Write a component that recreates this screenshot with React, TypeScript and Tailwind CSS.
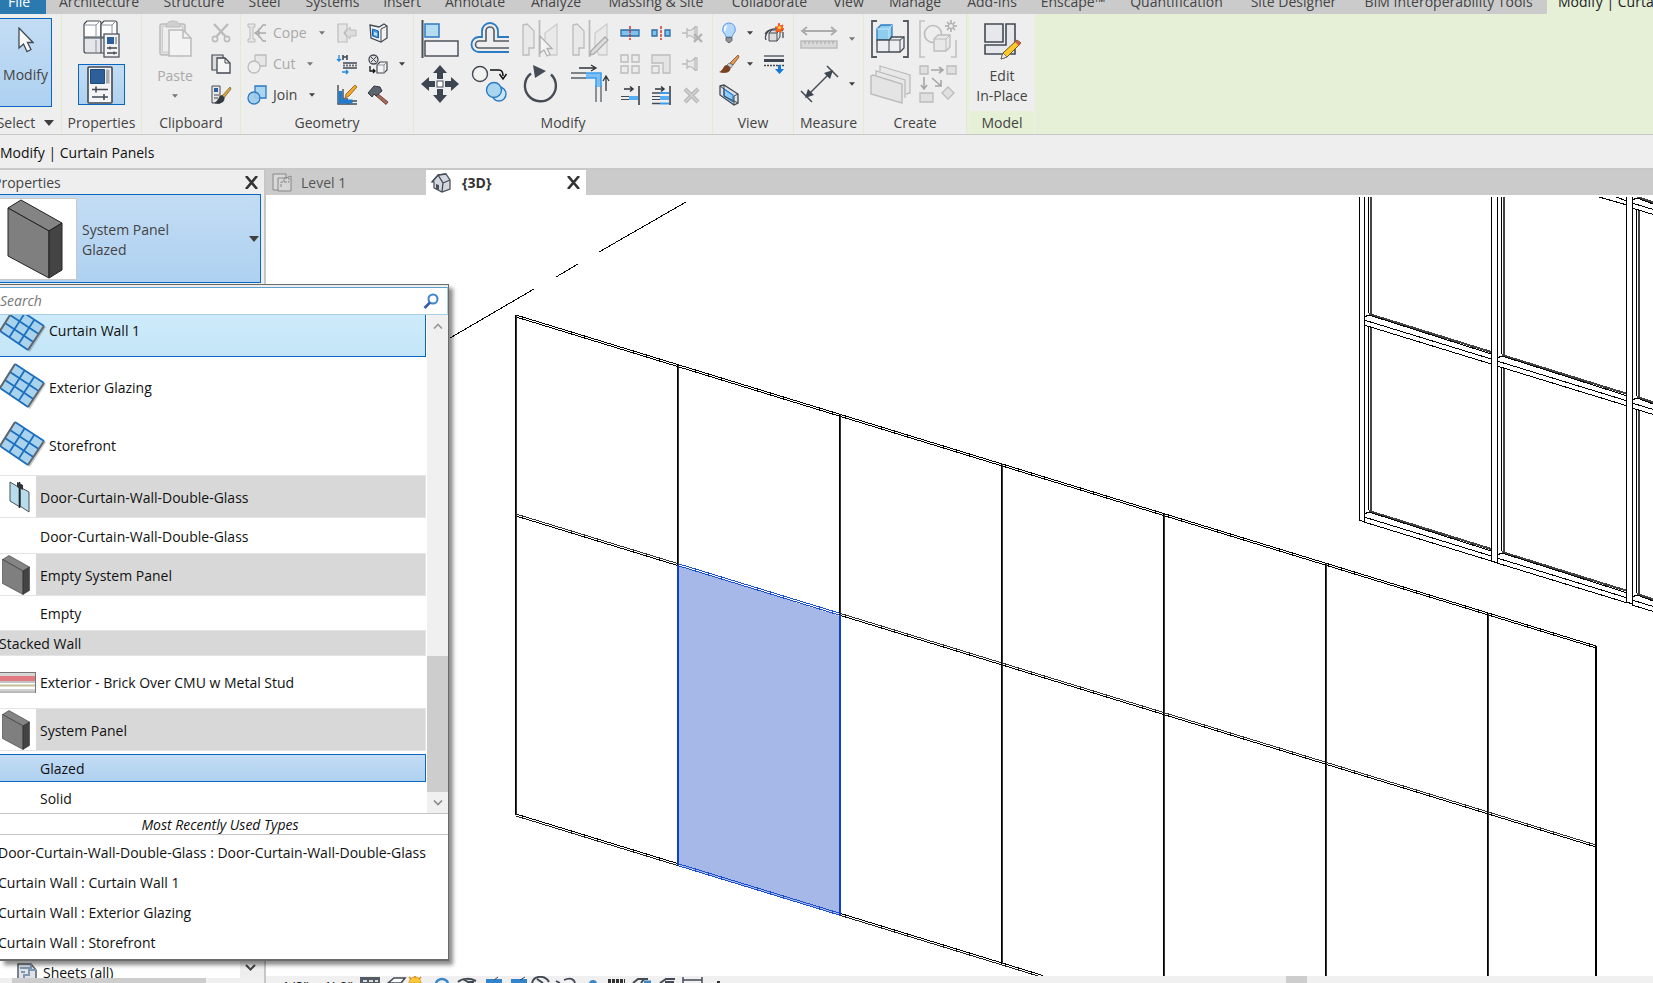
import type { ReactNode } from 'react';
import clsx from 'clsx';

const DARK = '#434a54';
const GREY = '#bcbcbc';
const PALE = '#e6e6e6';
const BLUE = '#2a7bc3';
const SKY = '#a9d5ef';

function Svg({ size = 20, children }: { size?: number; children: ReactNode }) {
  return (
    <svg width={size} height={size} viewBox={`0 0 ${size} ${size}`} fill="none" className="shrink-0 overflow-visible" aria-hidden="true">
      {children}
    </svg>
  );
}

function Caret({ dim = false, large = false }: { dim?: boolean; large?: boolean }) {
  return (
    <svg width={large ? 10 : 6} height={large ? 6 : 4} viewBox="0 0 10 6" className="shrink-0" aria-hidden="true">
      <path d="M0 0h10L5 6z" fill={dim ? '#777' : '#3f3f3f'} />
    </svg>
  );
}

function CloseIcon() {
  return (
    <svg width="13" height="13" viewBox="0 0 13 13" aria-hidden="true">
      <path d="M1 0L12 13M12 0L1 13" stroke="#333" strokeWidth="2.6" />
    </svg>
  );
}

/* ---------- ribbon icons ---------- */

const CursorIcon = () => (
  <svg width="16" height="26" viewBox="0 0 16 26" aria-hidden="true">
    <path d="M1 1v20l4.5-4 3.5 7.5 4-2-3.5-7H15z" fill="#f8f8f8" stroke={DARK} strokeWidth="1.3" />
  </svg>
);

const TypePropertiesIcon = () => (
  <Svg size={38}>
    <g stroke={DARK} strokeWidth="1.2" fill="#fdfdfd">
      <path d="M1 5q0-1 1-2l2-2h12q2 0 2 2v14H1z" />
      <path d="M18 5q0-1 1-2l2-2h11q2 0 2 2v14H18z" />
      <path d="M1 18h17v14q0 1-1 1H3q-2 0-2-2zM18 18h5v15h-5z" fill="#e4e6ea" />
      <rect x="21" y="14" width="15" height="23" fill="#f3f3f3" />
    </g>
    <path d="M2 5h11v11M13 5l4-4M19 5h10v8M29 5l4-4M13 20v12" stroke="#8d939b" />
    <path d="M24 17h7v7h-7z" fill="#2d5f9a" />
    <path d="M32 17h2v7h-2z" fill="#aaa" />
    <path d="M24 28h10M24 33h10M27 26.5v3M31 31.5v3" stroke={DARK} strokeWidth="1.3" />
  </Svg>
);

const PropertiesIcon = () => (
  <svg width="26" height="38" viewBox="0 0 26 38" aria-hidden="true">
    <rect x="1" y="1" width="24" height="36" rx="1" fill="#f4f4f4" stroke={DARK} strokeWidth="1.6" />
    <path d="M3.5 3.5h14v14h-14z" fill="#2d5f9a" stroke="#1f4a7c" />
    <path d="M19 3.5h3.5v14H19z" fill="#a9abb0" />
    <path d="M5 23.5h16M5 31h16M9 20.5v6M17 28v6" stroke={DARK} strokeWidth="1.6" />
  </svg>
);

const PasteIcon = () => (
  <Svg size={38}>
    <rect x="4" y="4" width="25" height="31" rx="2" fill="#dedede" stroke={GREY} strokeWidth="1.5" />
    <path d="M6.5 6.500h20V32h-20z" fill="#eee" stroke="#ccc" />
    <path d="M10 7c0-4 3-6 7-6s7 2 7 6z" fill="#d0d0d0" stroke={GREY} />
    <path d="M13 10h14l8 8v18H13z" fill="#f3f3f3" stroke={GREY} strokeWidth="1.5" />
    <path d="M27 10v8h8" stroke={GREY} strokeWidth="1.5" />
  </Svg>
);

const CutIcon = () => (
  <Svg>
    <path d="M3 1l12 13M17 1L5 14" stroke={GREY} strokeWidth="2.4" />
    <circle cx="4" cy="16" r="2.6" stroke={GREY} strokeWidth="1.6" />
    <circle cx="16" cy="16" r="2.6" stroke={GREY} strokeWidth="1.6" />
  </Svg>
);

const CopyIcon = () => (
  <Svg>
    <path d="M1 1h11v15H1z" fill="#ddd" stroke={DARK} strokeWidth="1.2" />
    <path d="M6 4h8l5 5v10H6z" fill="#f6f6f6" stroke={DARK} strokeWidth="1.3" />
    <path d="M14 4v5h5" stroke={DARK} />
  </Svg>
);

const MatchIcon = () => (
  <Svg>
    <path d="M1 1h8v17H1z" fill="#e8e8e8" stroke={DARK} />
    <path d="M3 3h4v4H3z" fill="#2d5f9a" />
    <path d="M3 10h5M3 13h4" stroke={DARK} />
    <path d="M19 2l-8 9 2 2 7-9z" fill="#d9a441" stroke="#775a20" strokeWidth=".7" />
    <path d="M11 10c-4 1-3 6-8 8 5 2 11 0 10.5-5.5z" fill="#333a42" />
  </Svg>
);

const CopeIcon = () => (
  <Svg>
    <path d="M1 1h7v3H6v12h2v3H1v-3h2V4H1z" fill={PALE} stroke={GREY} />
    <path d="M19 2h-3l-3 4h-1v8h1l3 4h3M8 10h11M12 7l-4 3 4 3" stroke="#aaa" strokeWidth="1.3" />
  </Svg>
);

const CutGeometryIcon = () => (
  <Svg>
    <path d="M8 1h11v11h-7" fill={PALE} stroke={GREY} strokeWidth="1.3" />
    <path d="M8 1v6" stroke={GREY} strokeWidth="1.3" />
    <circle cx="7" cy="13" r="6" fill="#efefef" stroke={GREY} strokeWidth="1.3" />
  </Svg>
);

const JoinIcon = () => (
  <Svg>
    <path d="M8 1h11v12H8z" fill={SKY} stroke={BLUE} strokeWidth="1.3" />
    <circle cx="7" cy="13" r="6" fill="#9fcbea" fillOpacity=".9" stroke={BLUE} strokeWidth="1.3" />
  </Svg>
);

const WallOpenIcon = () => (
  <Svg>
    <path d="M1 1h9v5l-3 4 3 4v5H1z" fill={PALE} stroke={GREY} strokeWidth="1.2" />
    <path d="M19 7h-6V4l-5 6 5 6v-3h6z" fill="#ddd" stroke={GREY} />
  </Svg>
);

const PaintFaceIcon = () => (
  <Svg>
    <path d="M2 2l9 2 5-3 3 2v12l-6 4L3 15z" fill="#f2f2f2" stroke={DARK} strokeWidth="1.3" />
    <path d="M13 6v13M13 6l6-3" stroke={DARK} />
    <path d="M4.5 6l6 2v7l-6-2z" fill="#3c94da" stroke="#1d62a5" />
    <path d="M6 9l3 1v3l-3-1z" fill="#bfe2fa" />
  </Svg>
);

const BeamIcon = () => (
  <Svg>
    <path d="M6 1v5M10 1v5M6 3h4" stroke={DARK} strokeWidth="1.6" />
    <path d="M2 1v6M0 5l2 2 2-2M5 18h6M9 16l2 2-2 2" stroke="#1e88e5" strokeWidth="1.3" />
    <path d="M6 9h14M6 14h14" stroke={DARK} strokeWidth="1.6" />
    <path d="M6 11.5h14" stroke="#6b7179" strokeWidth="2" strokeDasharray="2 1" />
  </Svg>
);

const SplitFaceIcon = () => (
  <Svg>
    <circle cx="5.5" cy="5.5" r="4.5" fill="#ddd" stroke={DARK} strokeWidth="1.3" />
    <path d="M3 3l5 5M8 3L3 8" stroke={DARK} />
    <path d="M2 12v5h5M5 15l2 2-2 2" stroke="#111" strokeWidth="1.3" />
    <path d="M9 11l3-3h7v8l-3 3H9z" fill="#f4f4f4" stroke={DARK} strokeWidth="1.2" />
    <path d="M9 11h7v8M16 11l3-3" stroke="#8d939b" />
  </Svg>
);

const WallJoinIcon = () => (
  <Svg>
    <path d="M1 0v19h19M6 4v10h5M11 19v-3h9" stroke={DARK} strokeWidth="1.4" />
    <path d="M3.5 6v10.500h12" stroke="#1e7bd0" strokeWidth="4" />
    <path d="M18 0l2 2L12 11l-4 2 1-4z" fill="#f4a52b" stroke="#8a5a14" strokeWidth=".8" />
  </Svg>
);

const HammerIcon = () => (
  <Svg>
    <path d="M9 8l11 9-2 2.5L7 10z" fill="#a86a58" stroke="#553229" strokeWidth=".8" />
    <path d="M0 8l6-7 6 1 2 4-6 5-2-2-2 3z" fill="#5c646e" stroke="#30363e" />
  </Svg>
);

const AlignIcon = () => (
  <Svg size={38}>
    <path d="M1.5 0v38" stroke="#4a4f57" strokeWidth="2" />
    <rect x="4" y="4" width="14" height="13" fill="#b5dcf0" stroke={BLUE} strokeWidth="1.5" />
    <rect x="4" y="21" width="33" height="15" fill="#f2f2f5" stroke={DARK} strokeWidth="1.4" />
  </Svg>
);

const OffsetIcon = () => (
  <Svg size={38}>
    <path d="M38 17H27V11a8 8 0 0 0-16 0v6H8a7.5 7.5 0 0 0 0 15h30" stroke={BLUE} strokeWidth="1.8" />
    <path d="M38 21H23V11a4 4 0 0 0-8 0v10H8a3.5 3.5 0 0 0 0 7h30" stroke="#555b64" strokeWidth="1.6" />
  </Svg>
);

function MirrorIcon({ draw = false }: { draw?: boolean }) {
  return (
    <Svg size={38}>
      <path d="M2 5l4-1 7 7v17H8v7H2z" fill="#e9e9e9" stroke={GREY} strokeWidth="1.3" />
      <path d="M36 4l-12 9v14l4 8h8z" fill="#e9e9e9" stroke="#ccc" strokeWidth="1.3" />
      <path d="M18.5 0v37" stroke={GREY} strokeWidth="1.8" />
      {draw ? (
        <path d="M20 31L34 17l3 3-14 14-4 1z" fill="#ddd" stroke="#aaa" strokeWidth="1.3" />
      ) : (
        <path d="M19 16v17l4-3 3 6 3-1.5-3-6h5z" fill="#f4f4f4" stroke="#b0b0b0" strokeWidth="1.3" />
      )}
    </Svg>
  );
}

const MoveIcon = () => (
  <Svg size={38}>
    <path
      d="M19 0l7 8h-4v6h-6V8h-4zM19 38l7-8h-4v-6h-6v6h-4zM0 19l8-7v4h6v6H8v4zM38 19l-8-7v4h-6v6h6v4z"
      fill="#3d4650"
    />
    <rect x="16" y="16" width="6" height="6" fill="#fff" stroke={DARK} />
  </Svg>
);

const CopyObjectIcon = () => (
  <Svg size={38}>
    <circle cx="9" cy="9" r="7.5" fill="#f2f2f2" stroke={DARK} strokeWidth="1.4" />
    <path d="M19 5h9c3 0 4 2 4 6M28.5 9l3.5 5 3.5-5" stroke="#111" strokeWidth="1.5" />
    <circle cx="28" cy="29" r="7" fill="#c9e6f7" stroke={BLUE} strokeWidth="1.4" />
    <circle cx="23" cy="25" r="7.500" fill="#a9d5ef" stroke={BLUE} strokeWidth="1.4" />
  </Svg>
);

const RotateIcon = () => (
  <Svg size={38}>
    <path d="M10 8.500a15.500 15.500 0 1 0 20 1" stroke="#454c55" strokeWidth="2.4" />
    <path d="M12 0l13 6-11 7z" fill="#454c55" />
  </Svg>
);

const TrimIcon = () => (
  <Svg size={38}>
    <path d="M8 3h16M20 0l5 3-5 3M35 26V12M32 16l3-5 3 5" stroke="#30363e" strokeWidth="1.3" />
    <path d="M0 8h15M0 13h15M25 20v17M30 20v17" stroke="#5a6068" strokeWidth="1.3" />
    <path d="M15 10.5h12.500V22" stroke="#7dbff5" strokeWidth="5" />
    <path d="M15 8h15v14M15 13h10v9" stroke="#3a9cf0" strokeWidth="1.5" />
  </Svg>
);

const SplitIcon = ({ gap = false }: { gap?: boolean }) => (
  <Svg>
    <path d={gap ? 'M1 7h5v6H1zM14 7h5v6h-5z' : 'M1 7h18v6H1z'} fill="#7fc0ec" stroke="#2b6ea8" strokeWidth="1.3" />
    <path d="M10 3v14" stroke="#d8261c" strokeWidth="1.4" strokeDasharray="3 1" />
  </Svg>
);

const ArrayIcon = () => (
  <Svg>
    <path d="M1 1h7v7H1zM12 1h7v7h-7zM1 12h7v7H1zM12 12h7v7h-7z" fill="#ececec" stroke={GREY} strokeWidth="1.4" />
  </Svg>
);

const ScaleIcon = () => (
  <Svg>
    <path d="M1 1h18v18h-7V9H1z" fill="#e4e4e4" stroke={GREY} strokeWidth="1.3" />
    <path d="M1 12h7v7H1z" fill="#ececec" stroke={GREY} strokeWidth="1.3" />
  </Svg>
);

const PinIcon = ({ off = false }: { off?: boolean }) => (
  <Svg>
    <path d="M0 10h5M5 5v10M5 7c4 1 5 0 8-3v12c-3-3-4-4-8-3M13 4v12h2V4z" stroke={GREY} strokeWidth="1.3" fill="#e8e8e8" />
    {off && <path d="M12 11l8 8M20 11l-8 8" stroke="#b3b3b3" strokeWidth="2.4" />}
  </Svg>
);

const ExtendIcon = ({ many = false }: { many?: boolean }) => (
  <Svg>
    <path d="M4 4h8M10 1.5l3 2.5-3 2.500M19 1v19" stroke="#30363e" strokeWidth="1.5" />
    <path d="M1 11.5h8M1 14.5h8" stroke={DARK} strokeWidth="1.2" />
    <path d="M9 13h9" stroke="#55aef5" strokeWidth="4" />
    {many && (
      <>
        <path d="M1 8h8M1 18.5h8" stroke={DARK} strokeWidth="1.5" />
        <path d="M9 8h9M9 18.5h9" stroke="#3a9cf0" strokeWidth="2" />
      </>
    )}
  </Svg>
);

const DeleteIcon = () => (
  <Svg>
    <path d="M3 4l13 13M16 4L3 17" stroke="#b5b5b5" strokeWidth="4" />
    <path d="M3.5 4.5l12 12M15.5 4.5l-12 12" stroke="#cecece" strokeWidth="2" />
  </Svg>
);

const BulbIcon = () => (
  <Svg>
    <path d="M10 0a6.5 6.5 0 0 0-4 11.5L7 14h6l1-2.5A6.5 6.5 0 0 0 10 0z" fill="#b4d8fb" stroke="#5b9be0" />
    <path d="M8 3c-2 1-2.5 3-2 5" stroke="#fff" strokeWidth="1.6" />
    <path d="M7 14.5h6v3l-2 2H9l-2-2z" fill="#8d939b" stroke="#555" strokeWidth=".8" />
  </Svg>
);

const HideIcon = () => (
  <Svg>
    <path d="M1 11c3-5 12-7 18-3M2 17c-2-5 2-9 5-10M19 15V9" stroke={DARK} strokeWidth="1.3" />
    <path d="M5 10h8v8H5zM5 10l3-3h8l-3 3M16 7v7l-3 4" fill="#dcdcdc" stroke={DARK} />
    <path d="M15 0l1 3 3-1-1 3 2 1-3 1 0 3-2-2-3 1 1-3-2-2h3z" fill="#ff6a1a" stroke="#f0561a" />
    <circle cx="15.5" cy="4.5" r="1.6" fill="#ffd24a" />
  </Svg>
);

const BrushIcon = () => (
  <Svg>
    <path d="M19 1l-8 8 3 2 6-8z" fill="#e59a55" stroke="#7a4a20" strokeWidth=".8" />
    <path d="M10 9l-2 2 4 3 2-3z" fill="#c9ced6" stroke="#555" strokeWidth=".6" />
    <path d="M8 11c-4 0-3 5-8 7 5 2 12 1 11.5-4.5z" fill="#7b4220" />
  </Svg>
);

const LineworkIcon = () => (
  <Svg>
    <path d="M0 2h20" stroke={DARK} strokeWidth="1.3" />
    <path d="M0 6.5h20" stroke="#3d4650" strokeWidth="3" />
    <path d="M0 11.5h20" stroke={DARK} strokeWidth="1.3" strokeDasharray="2 1" />
    <path d="M14 11h3v4h3l-4.5 5-4.5-5h3z" fill="#1478d4" />
  </Svg>
);

const SectionBoxIcon = () => (
  <Svg>
    <path d="M1 1l4-1 14 9v9l-4 2L1 10z" fill="#dfe3e8" stroke={DARK} strokeWidth="1.3" />
    <path d="M5 4l9 6v7l-9-6z" fill="#8ecbf7" stroke="#1e7bd0" strokeWidth="1.2" />
    <path d="M15 11v9M15 11l4-2M1 1l4 3M5 0v11l14 7" stroke={DARK} />
  </Svg>
);

const RulerIcon = () => (
  <Svg size={38}>
    <path d="M3 11h31M7 7l-5 4 5 4M31 7l5 4-5 4" stroke="#ababab" strokeWidth="1.8" />
    <rect x="1" y="21" width="36" height="7" fill="#d9d9d9" stroke={GREY} strokeWidth="1.5" />
    <path d="M5 21v3M9 21v3M13 21v3M17 21v3M21 21v3M25 21v3M29 21v3M33 21v3" stroke="#a5a5a5" />
  </Svg>
);

const DimensionIcon = () => (
  <Svg size={38}>
    <path d="M8 30L30 8" stroke="#454c55" strokeWidth="1.5" />
    <path d="M5 33l3-9 6 6zM33 5l-3 9-6-6z" fill="#3d4650" />
    <path d="M1 26l11 11M27 1l11 11" stroke="#454c55" strokeWidth="1.5" />
  </Svg>
);

const AssemblyIcon = () => (
  <Svg size={38}>
    <path d="M6 1H1v36h5M32 1h5v36h-5" stroke="#555b64" strokeWidth="1.8" />
    <path d="M6 9l4-4h11v11l-3 4H6z" fill="#8fcdee" stroke={BLUE} strokeWidth="1.3" />
    <path d="M6 9h12v11M18 9l3-4" stroke="#c9e8f8" />
    <path d="M6 20h12l3-3h12v11l-4 4H6z" fill="#eceef1" stroke={DARK} strokeWidth="1.3" />
    <path d="M18 20v12M18 20h11v12M29 20l4-3" stroke={DARK} />
  </Svg>
);

const PartsIcon = () => (
  <Svg size={38}>
    <path d="M6 1H1v36h5M32 37h5V20" stroke="#c2c2c2" strokeWidth="1.6" />
    <circle cx="14" cy="14" r="8.5" stroke={GREY} strokeWidth="1.6" />
    <path d="M15 19l4-4h12v12l-4 4H15z" fill="#e8e8e8" stroke={GREY} strokeWidth="1.3" />
    <path d="M15 19h12v12M27 19l4-4" stroke={GREY} />
    <path d="M32 0v12M26 6h12M28 2l8 8M36 2l-8 8" stroke="#aaa" strokeWidth="1.5" />
    <circle cx="32" cy="6" r="2.5" fill="#eee" stroke="#aaa" />
  </Svg>
);

const GroupIcon = () => (
  <Svg size={38}>
    <path d="M9 6V1l30 9v18l-4 1" fill="#e8e8e8" stroke={GREY} strokeWidth="1.3" />
    <path d="M5 10V6l29 9v18" fill="#e8e8e8" stroke={GREY} strokeWidth="1.3" />
    <path d="M0 11l2-1 29 9v19L0 29z" fill="#e4e4e4" stroke={GREY} strokeWidth="1.4" />
  </Svg>
);

const SimilarIcon = () => (
  <Svg size={38}>
    <path d="M1 1h8v8H1zM28 1h9v8h-9zM1 28h13v9H1zM29 22l6 6-6 6-6-6z" fill="#e0e0e0" stroke={GREY} strokeWidth="1.3" />
    <path d="M12 5h11M20 2l4 3-4 3M5 12v11M2 20l3 4 3-4M13 13l9 8M22 15v6h-6" stroke="#a6a6a6" strokeWidth="1.6" />
  </Svg>
);

const EditInPlaceIcon = () => (
  <Svg size={38}>
    <path d="M2 2h18v18H2zM23 2h9v30H2v-9h21z" fill="#e6e8ec" stroke={DARK} strokeWidth="1.6" />
    <path d="M34 18l4 3-14 14-6 2 2-6z" fill="#ffc928" stroke="#6b5420" />
    <path d="M34 18l4 3-2 3-4-4z" fill="#c9604a" />
    <path d="M20 31l4 4-6 2z" fill="#eee" stroke="#555" strokeWidth=".7" />
  </Svg>
);

/* ---------- ribbon ---------- */

const TABS = [
  { label: 'Architecture', width: 'w-[106px]' },
  { label: 'Structure', width: 'w-[84px]' },
  { label: 'Steel', width: 'w-[57px]' },
  { label: 'Systems', width: 'w-[79px]' },
  { label: 'Insert', width: 'w-[60px]' },
  { label: 'Annotate', width: 'w-[86px]' },
  { label: 'Analyze', width: 'w-[76px]' },
  { label: 'Massing & Site', width: 'w-[124px]' },
  { label: 'Collaborate', width: 'w-[103px]' },
  { label: 'View', width: 'w-[55px]' },
  { label: 'Manage', width: 'w-[78px]' },
  { label: 'Add-Ins', width: 'w-[76px]' },
  { label: 'Enscape™', width: 'w-[86px]' },
  { label: 'Quantification', width: 'w-[121px]' },
  { label: 'Site Designer', width: 'w-[113px]' },
  { label: 'BIM Interoperability Tools', width: 'w-[197px]' },
];

function TabStrip() {
  return (
    <nav className="flex h-[14px] items-end overflow-hidden whitespace-nowrap bg-[#cbcbcb] text-[#444]">
      <button className="h-6 w-[46px] shrink-0 bg-[#2a7ab0] pr-2 text-center leading-6 text-white">File</button>
      {TABS.map((tab) => (
        <button key={tab.label} className={clsx('flex h-6 shrink-0 justify-center leading-6', tab.width)}>
          {tab.label}
        </button>
      ))}
      <button className="h-6 flex-1 overflow-hidden bg-[#e5f0d7] pl-[11px] text-left leading-6 text-[#222]">Modify | Curtain Panels</button>
    </nav>
  );
}

function Panel({ title, className, children }: { title: ReactNode; className: string; children: ReactNode }) {
  return (
    <section className={clsx('flex shrink-0 flex-col border-r border-[#dfecce] bg-[#eee]', className)}>
      <div className="flex h-[97px] pt-[3px]">{children}</div>
      <div className="flex h-[23px] items-center justify-center whitespace-nowrap pt-px leading-5">{title}</div>
    </section>
  );
}

function Tool({ label, children }: { label: string; children: ReactNode }) {
  return (
    <button aria-label={label} className="flex items-center justify-center">
      {children}
    </button>
  );
}

function GeometryRow({ label, icon, dim = false }: { label: string; icon: ReactNode; dim?: boolean }) {
  return (
    <button className={clsx('flex items-center gap-[6px] whitespace-nowrap', dim && 'text-[#a9a9a9]')}>
      {icon}
      <span>{label}</span>
      <span className="pl-[6px]">
        <Caret dim={dim} />
      </span>
    </button>
  );
}

function Ribbon() {
  return (
    <div className="flex h-[121px] shrink-0 overflow-hidden border-b border-[#c8c8c8] bg-[#e5f0d7] text-[#444]">
      <Panel
        className="w-[62px]"
        title={
          <button className="-ml-[10px] flex items-center gap-[9px]">
            Select <Caret large />
          </button>
        }
      >
        <button className="mt-px flex h-[89px] w-[52px] flex-col items-center gap-3 border border-l-0 border-[#0b66c0] bg-linear-to-b from-[#c3dcf4] to-[#aed1f1] pt-2">
          <CursorIcon />
          <span className="leading-5">Modify</span>
        </button>
      </Panel>

      <Panel className="w-[80px]" title="Properties">
        <div className="flex w-full flex-col items-center gap-[6px] pt-[3px]">
          <Tool label="Type Properties">
            <TypePropertiesIcon />
          </Tool>
          <button aria-label="Properties" className="flex h-[41px] w-[47px] items-center justify-center border border-[#0b66c0] bg-linear-to-b from-[#c3dcf4] to-[#aed1f1] pr-[3px]">
            <PropertiesIcon />
          </button>
        </div>
      </Panel>

      <Panel className="w-[99px]" title="Clipboard">
        <button className="flex w-[66px] flex-col items-center gap-2 pt-[3px] text-[#a9a9a9]">
          <PasteIcon />
          <span className="leading-5">Paste</span>
          <Caret dim />
        </button>
        <div className="grid h-[93px] grid-rows-3 pl-[3px]">
          <Tool label="Cut"><CutIcon /></Tool>
          <Tool label="Copy"><CopyIcon /></Tool>
          <Tool label="Match Type"><MatchIcon /></Tool>
        </div>
      </Panel>

      <Panel className="w-[173px]" title="Geometry">
        <div className="grid h-[93px] w-[96px] grid-rows-3 pl-[6px]">
          <GeometryRow label="Cope" icon={<CopeIcon />} dim />
          <GeometryRow label="Cut" icon={<CutGeometryIcon />} dim />
          <GeometryRow label="Join" icon={<JoinIcon />} />
        </div>
        <div className="grid h-[93px] grid-cols-[20px_20px_6px] grid-rows-3 gap-x-[11px]">
          <Tool label="Wall Opening"><WallOpenIcon /></Tool>
          <Tool label="Paint"><PaintFaceIcon /></Tool>
          <span />
          <Tool label="Beam Joins"><BeamIcon /></Tool>
          <Tool label="Split Face"><SplitFaceIcon /></Tool>
          <Tool label="More"><Caret /></Tool>
          <Tool label="Wall Joins"><WallJoinIcon /></Tool>
          <Tool label="Demolish"><HammerIcon /></Tool>
        </div>
      </Panel>

      <Panel className="w-[299px]" title="Modify">
        <div className="grid h-[89px] grid-cols-4 grid-rows-2 gap-x-3 pl-[7px]">
          <Tool label="Align"><AlignIcon /></Tool>
          <Tool label="Offset"><OffsetIcon /></Tool>
          <Tool label="Mirror - Pick Axis"><MirrorIcon /></Tool>
          <Tool label="Mirror - Draw Axis"><MirrorIcon draw /></Tool>
          <Tool label="Move"><MoveIcon /></Tool>
          <Tool label="Copy"><CopyObjectIcon /></Tool>
          <Tool label="Rotate"><RotateIcon /></Tool>
          <Tool label="Trim/Extend to Corner"><TrimIcon /></Tool>
        </div>
        <div className="grid h-[93px] grid-cols-3 grid-rows-3 gap-x-[11px] pl-[11px]">
          <Tool label="Split Element"><SplitIcon /></Tool>
          <Tool label="Split with Gap"><SplitIcon gap /></Tool>
          <Tool label="Unpin"><PinIcon off /></Tool>
          <Tool label="Array"><ArrayIcon /></Tool>
          <Tool label="Scale"><ScaleIcon /></Tool>
          <Tool label="Pin"><PinIcon /></Tool>
          <Tool label="Trim/Extend Single"><ExtendIcon /></Tool>
          <Tool label="Trim/Extend Multiple"><ExtendIcon many /></Tool>
          <Tool label="Delete"><DeleteIcon /></Tool>
        </div>
      </Panel>

      <Panel className="w-[81px]" title="View">
        <div className="grid h-[93px] grid-cols-[20px_6px_20px] grid-rows-3 gap-x-2 pl-[6px]">
          <Tool label="Hide in View"><BulbIcon /></Tool>
          <Tool label="Hide options"><Caret /></Tool>
          <Tool label="Displace Elements"><span className="pl-[6px]"><HideIcon /></span></Tool>
          <Tool label="Override Graphics"><BrushIcon /></Tool>
          <Tool label="Override options"><Caret /></Tool>
          <Tool label="Linework"><span className="pl-[6px]"><LineworkIcon /></span></Tool>
          <Tool label="Selection Box"><SectionBoxIcon /></Tool>
        </div>
      </Panel>

      <Panel className="w-[70px]" title="Measure">
        <div className="grid h-[89px] grid-cols-[38px_6px] grid-rows-2 gap-x-[11px] pl-[6px]">
          <Tool label="Measure Between Two References"><RulerIcon /></Tool>
          <Tool label="Measure options"><Caret dim /></Tool>
          <Tool label="Aligned Dimension"><DimensionIcon /></Tool>
          <Tool label="Dimension options"><Caret /></Tool>
        </div>
      </Panel>

      <Panel className="w-[103px]" title="Create">
        <div className="grid h-[89px] grid-cols-2 grid-rows-2 gap-x-[10px] pl-[7px]">
          <Tool label="Create Assembly"><AssemblyIcon /></Tool>
          <Tool label="Create Parts"><PartsIcon /></Tool>
          <Tool label="Create Group"><GroupIcon /></Tool>
          <Tool label="Create Similar"><SimilarIcon /></Tool>
        </div>
      </Panel>

      <section className="ml-[2px] flex w-[66px] shrink-0 flex-col bg-[#eee] px-px">
        <button className="flex h-[97px] flex-col items-center pt-2 leading-5">
          <EditInPlaceIcon />
          <span className="pt-[6px]">Edit</span>
          <span>In-Place</span>
        </button>
        <div className="flex h-[23px] items-center justify-center bg-[#e5f0d7] pt-px">Model</div>
      </section>
    </div>
  );
}

/* ---------- type selector ---------- */

function PanelThumb({ large = false }: { large?: boolean }) {
  return (
    <svg width={large ? 56 : 28} height={large ? 80 : 40} viewBox="0 0 56 80" className="shrink-0" aria-hidden="true">
      <g stroke="#222" strokeWidth="1" strokeLinejoin="round">
        <path d="M1 9L14 1l41 23-13 8z" fill="#848484" />
        <path d="M1 9l41 23v47L1 57z" fill="#7f7f7f" />
        <path d="M42 32l13-8v47l-13 8z" fill="#444" />
      </g>
    </svg>
  );
}

function CurtainWallIcon() {
  return (
    <svg width="46" height="46" viewBox="0 0 46 46" className="shrink-0" aria-hidden="true">
      <path d="M17 2L46 21 30 46 1 27z" fill="#555" fillOpacity=".3" />
      <path d="M15 1L44 20 28 44 0 25z" fill="#a9d3ec" />
      <path d="M24.700 7.300L9.300 31.300M34.300 13.700L18.700 37.700M10 9l28.700 19M5 17l28.300 19M15 1L44 20M0 25l28 19" stroke="#1c6fbe" strokeWidth="1.8" />
      <path d="M15 1L0 25M44 20L28 44" stroke="#5d6670" strokeWidth="2" />
    </svg>
  );
}

const DoorIcon = () => (
  <svg width="22" height="34" viewBox="0 0 22 34" className="shrink-0" aria-hidden="true">
    <path d="M1 2l10 6v19L1 21zM11 7l9 5v20l-9-6z" fill="#b9dcec" stroke="#45525c" />
    <path d="M10.5 2v26" stroke="#1d252b" strokeWidth="1.6" />
    <path d="M8 2l6 3v5l-6-3z" fill="#333" />
  </svg>
);

const BrickIcon = () => (
  <svg width="36" height="21" viewBox="0 0 36 21" className="shrink-0" aria-hidden="true">
    <path d="M0 0h36v21H0z" fill="#fff" />
    <path d="M0 .5h36M0 20h36M35.5 0v21" stroke="#777" />
    <path d="M0 1h35v3H0z" fill="#d7d7d7" />
    <path d="M0 4h35v5H0z" fill="#e27a83" />
    <path d="M0 10h35" stroke="#888" />
    <path d="M0 13.5h35" stroke="#c3bf96" strokeWidth="2" />
    <path d="M0 18h35" stroke="#d0d0d0" strokeWidth="2" />
  </svg>
);

function FamilyHeader({ name, icon }: { name: string; icon: ReactNode }) {
  return (
    <div className="flex h-[43px] items-center border border-l-0 border-[#e4e4e4] bg-[#d8d8d8]">
      <span className="flex h-full w-9 shrink-0 items-center justify-center bg-white pr-1">{icon}</span>
      <span className="pt-[2px] pl-1">{name}</span>
    </div>
  );
}

function TypeRow({ name, className }: { name: string; className: string }) {
  return (
    <button role="option" aria-selected="false" className={clsx('flex items-center pl-10 text-left', className)}>
      {name}
    </button>
  );
}

const RECENT = [
  'Door-Curtain-Wall-Double-Glass : Door-Curtain-Wall-Double-Glass',
  'Curtain Wall : Curtain Wall 1',
  'Curtain Wall : Exterior Glazing',
  'Curtain Wall : Storefront',
];

function TypeMenu() {
  return (
    <div className="absolute top-full left-0 z-10 mt-px w-[449px] border border-l-0 border-b-2 border-[#6a6a6a] bg-white text-[#111] shadow-[4px_4px_4px_rgba(0,0,0,0.45)]">
      <div className="border-t-2 border-[#eee]">
        <label className="flex h-[28px] items-center border border-l-0 border-[#a9cfe6] border-t-[#5da0cc] bg-white pr-2">
          <span className="sr-only">Search types</span>
          <input type="text" placeholder="Search" className="min-w-0 flex-1 italic outline-none placeholder:text-[#777]" />
          <svg width="16" height="16" viewBox="0 0 16 16" fill="none" aria-hidden="true">
            <circle cx="10" cy="6" r="4.5" stroke="#3a86c8" strokeWidth="2" />
            <path d="M7 9.5L1.5 15" stroke="#3b5ba5" strokeWidth="2.6" />
          </svg>
        </label>
      </div>

      <div className="flex h-[498px] overflow-hidden">
        <div role="listbox" aria-label="Types" className="flex min-w-0 flex-1 flex-col">
          <button role="option" aria-selected="false" className="mb-[2px] flex h-[42px] items-start overflow-hidden border-r border-b border-[#0b66c0] bg-linear-to-b from-[#cdebfa] to-[#c4e6f8] text-left">
            <span className="flex h-8 items-center gap-[3px]">
              <span className="-mt-1">
                <CurtainWallIcon />
              </span>
              Curtain Wall 1
            </span>
          </button>
          {['Exterior Glazing', 'Storefront'].map((name) => (
            <button role="option" aria-selected="false" key={name} className="flex h-[58px] items-center gap-[3px] text-left">
              <span className="-mt-1">
                <CurtainWallIcon />
              </span>
              {name}
            </button>
          ))}
          <FamilyHeader name="Door-Curtain-Wall-Double-Glass" icon={<span className="pl-2"><DoorIcon /></span>} />
          <TypeRow name="Door-Curtain-Wall-Double-Glass" className="h-[35px] pt-[2px]" />
          <FamilyHeader name="Empty System Panel" icon={<PanelThumb />} />
          <TypeRow name="Empty" className="h-[34px] pt-[2px]" />
          <div className="-ml-[2px] flex h-[26px] items-center border border-[#e4e4e4] bg-[#d8d8d8] pt-px">Stacked Wall</div>
          <button role="option" aria-selected="false" className="flex h-[52px] items-center gap-1 pt-px text-left">
            <BrickIcon />
            Exterior - Brick Over CMU w Metal Stud
          </button>
          <FamilyHeader name="System Panel" icon={<PanelThumb />} />
          <button role="option" aria-selected="true" className="mt-[3px] flex h-[28px] items-center border border-l-0 border-[#0b66c0] bg-linear-to-b from-[#c3dcf4] to-[#aed1f1] pt-[2px] pl-10 text-left">
            Glazed
          </button>
          <TypeRow name="Solid" className="h-[31px] pt-[2px]" />
        </div>
        <div className="ml-px flex w-[21px] flex-col bg-[#f0f0f0]">
          <div className="flex h-[21px] items-center justify-center">
            <svg width="10" height="6" viewBox="0 0 10 6" fill="none"><path d="M1 5.500l4-4 4 4" stroke="#999" strokeWidth="1.6" /></svg>
          </div>
          <div className="flex-1" />
          <div className="h-[136px] bg-[#cdcdcd]" />
          <div className="flex h-[21px] items-center justify-center">
            <svg width="10" height="6" viewBox="0 0 10 6" fill="none"><path d="M1 .5l4 4 4-4" stroke="#888" strokeWidth="1.6" /></svg>
          </div>
        </div>
      </div>

      <div className="h-[22px] border-y border-[#c4c4c4] pt-px pr-2 text-center leading-5 italic">Most Recently Used Types</div>
      <div className="flex flex-col py-[2px]">
        {RECENT.map((item) => (
          <button key={item} className="-ml-[2px] h-[30px] pt-[2px] text-left whitespace-nowrap">
            {item}
          </button>
        ))}
      </div>
    </div>
  );
}

function PropertiesPalette() {
  return (
    <aside className="flex w-[266px] shrink-0 flex-col border-r-2 border-[#c6c6c6] bg-[#eee]">
      <header className="flex h-[24px] items-center justify-between pt-px pr-[6px] text-[#444]">
        <span className="-ml-[7px]">Properties</span>
        <button aria-label="Close Properties">
          <CloseIcon />
        </button>
      </header>
      <div className="relative pr-[3px]">
        <button aria-expanded="true" className="flex h-[89px] w-full items-center border border-l-0 border-[#0b66c0] bg-linear-to-b from-[#c3dcf4] to-[#aed1f1] text-left text-[#444]">
          <span className="flex h-[82px] w-[77px] items-center border border-l-0 border-[#c8c8c8] bg-white pl-[7px]">
            <PanelThumb large />
          </span>
          <span className="flex-1 pt-[2px] pl-[5px] leading-5">
            System Panel
            <br />
            Glazed
          </span>
          <span className="pt-px pr-px">
            <Caret large />
          </span>
        </button>
        <TypeMenu />
      </div>
      <div className="flex-1" />
      <div className="flex h-[24px]">
        <div className="flex flex-1 items-start overflow-hidden bg-white pt-[9px] pl-[17px]">
          <svg width="20" height="20" viewBox="0 0 20 20" fill="none" aria-hidden="true">
            <path d="M1 1h13l5 6v13H1z" fill="#dfe3e8" stroke="#5d6670" strokeWidth="1.6" />
            <path d="M3 5h9v7H7v8M14 1v6h5M4 9h4" stroke="#7f98b2" strokeWidth="2" />
          </svg>
          <span className="pl-[6px] leading-5 text-[#111]">Sheets (all)</span>
        </div>
        <div className="flex w-[24px] justify-center pt-[10px] pr-1">
          <svg width="11" height="7" viewBox="0 0 11 7" fill="none"><path d="M1 1l4.5 4.5L10 1" stroke="#444" strokeWidth="2" /></svg>
        </div>
      </div>
      <div className="h-[5px] bg-[#f0f0f0] pl-3">
        <div className="h-full w-[194px] bg-[#cdcdcd]" />
      </div>
    </aside>
  );
}

/* ---------- drawing area ---------- */

const SLOPE = 0.3065;
const MULLIONS = [516, 678, 840, 1002, 1164, 1326, 1488];

/* A pair of parallel edges that follows the wall's slope. `y` is the height at the wall's left end. */
function GridLine({ x1, x2, y, color = '#000', shade = '#222' }: { x1: number; x2: number; y: number; color?: string; shade?: string }) {
  const start = y + (x1 - 516) * SLOPE;
  const end = y + (x2 - 516) * SLOPE;
  return (
    <>
      <line x1={x1} y1={start} x2={x2} y2={end} stroke={color} />
      <line x1={x1} y1={start + 2} x2={x2} y2={end + 2} stroke={shade} />
    </>
  );
}

/* One transom of the framed wall: shaded reveal on top, then two faces. */
function Rail({ x1, x2, y }: { x1: number; x2: number; y: number }) {
  const drop = (x2 - x1) * SLOPE;
  return (
    <>
      <path d={`M${x1} ${y}L${x2} ${y + drop}v13L${x1} ${y + 13}z`} fill="#fff" />
      <path d={`M${x1 + 5} ${y + 2}L${x2} ${y + drop + 1}`} stroke="#444" strokeWidth="2" />
      <path d={`M${x1} ${y + 5}l5 -2L${x2} ${y + drop + 3}M${x1} ${y + 8}L${x2} ${y + drop + 8}M${x1} ${y + 13}L${x2} ${y + drop + 13}`} stroke="#000" />
    </>
  );
}

const FRAMES = [
  { x: 1359, w: 5, end: 520, rails: [312, 509] },
  { x: 1491, w: 6, end: 561, rails: [159, 353, 550] },
  { x: 1626, w: 6, end: 602, rails: [195, 395, 592] },
];

function Model() {
  return (
    <svg className="block h-full w-full" shapeRendering="crispEdges" fill="none" role="img" aria-label="3D view">
      <g transform="translate(-266 -195)">
        <path d="M450 338L534 289M556 277l22-13M599 252l87-50" stroke="#000" />

        <path d="M678 566L840 616V915L678 865z" fill="#a6b8e7" />
        <GridLine x1={516} x2={1596} y={315} shade="#000" />
        <GridLine x1={516} x2={678} y={514} shade="#000" color="#333" />
        <GridLine x1={840} x2={1596} y={514} shade="#000" color="#333" />
        <GridLine x1={516} x2={678} y={814} />
        <GridLine x1={840} x2={1043} y={814} />
        {MULLIONS.map((x, i) => {
          const top = 315 + (x - 516) * SLOPE;
          const bottom = i < 4 ? top + 500 : 976;
          return (
            <g key={x}>
              <line x1={x - 0.5} y1={top} x2={x - 0.5} y2={bottom} stroke="#000" />
              <line x1={x + 0.5} y1={top} x2={x + 0.5} y2={bottom} stroke="#333" />
            </g>
          );
        })}
        <line x1="1596" y1="646" x2="1596" y2="976" stroke="#000" strokeWidth="2" />
        <GridLine x1={678} x2={840} y={514} color="#1b4fd0" shade="#1b4fd0" />
        <GridLine x1={678} x2={840} y={814} color="#1b4fd0" shade="#1b4fd0" />
        <path d="M678 565V865M840 615V915" stroke="#1040c4" strokeWidth="2" />

        {FRAMES.map(({ x, w, end, rails }, i) => {
          const next = FRAMES[i + 1]?.x ?? 1660;
          return (
            <g key={x}>
              <path d={`M${x + w + 4.5} 197V${end - 6}`} stroke="#000" />
              <path d={`M${x + w + 7} 197V${end - 7}`} stroke="#444" strokeWidth="2" />
              {rails.filter((y) => y > 190).map((y) => (
                <Rail key={y} x1={x + w} x2={next} y={y} />
              ))}
            </g>
          );
        })}
        <path d="M1599 197l28 8M1616 197l11 4" stroke="#000" />
        {FRAMES.map(({ x, w, end }) => (
          <path key={x} d={`M${x + 0.5} 197V${end}l${w} 2V197`} fill="#fff" stroke="#000" />
        ))}
        <path d="M266 195H1700V197H266z" fill="#fff" />
      </g>
    </svg>
  );
}

function ViewControls() {
  return (
    <footer className="flex h-[7px] shrink-0 overflow-hidden bg-[#f0f0f0] pl-4 text-[#111]">
      <span className="w-[78px] shrink-0 pt-px leading-5">1/8" = 1'-0"</span>
      <svg width="360" height="7" viewBox="0 0 360 7" fill="none" className="shrink-0" aria-hidden="true">
        <path d="M0 1h20v6H0z" fill="#555b64" />
        <path d="M3 5h4M9 5h4M15 5h3" stroke="#ddd" strokeWidth="2" />
        <path d="M28 7l6-5h11l-4 5z" fill="#fff" stroke={DARK} strokeWidth="1.6" />
        <path d="M49 7a6 6 0 0 1 12 0z" fill="#ffc83a" stroke="#e0a020" />
        <path d="M55 0v2M49 1l2 2M61 1l-2 2" stroke="#d98a12" strokeWidth="1.5" />
        <path d="M76 8a6 5 0 0 1 12 0" stroke="#3a86c8" strokeWidth="2.4" />
        <path d="M98 6c4-4 12-4 18-1M103 3l5 3h6" stroke={DARK} strokeWidth="2" />
        <path d="M126 3h16v5h-16zM151 3h16v5h-16z" fill="#3184cc" />
        <path d="M134 4l4-3M160 4l5-3" stroke={DARK} />
        <path d="M172 7c2-8 13-8 17-1M177 3l6 4" stroke={DARK} strokeWidth="2" />
        <path d="M204 4c6-3 10-1 11 3M196 5l4 2" stroke={DARK} strokeWidth="1.8" />
        <path d="M229 8a4 4 0 0 1 8 0z" fill="#3a86c8" />
        <path d="M248 5h17" stroke="#333" strokeWidth="4" strokeDasharray="3 1" />
        <path d="M273 7l5-4h10M281 7l3-4" stroke={DARK} strokeWidth="2" />
        <path d="M284 6h7" stroke="#3a86c8" strokeWidth="3" />
        <path d="M300 7l6-4h9M305 6h9" stroke={DARK} strokeWidth="2" />
        <path d="M323 1v6M342 1v6M323 4h19" stroke={DARK} strokeWidth="1.5" />
        <path d="M357 6h3" stroke="#333" strokeWidth="2" />
      </svg>
      <div className="flex min-w-0 flex-1 justify-center">
        <div className="ml-[220px] h-full w-[21px] bg-[#cdcdcd]" />
      </div>
    </footer>
  );
}

function Workspace() {
  return (
    <main className="flex min-w-0 flex-1 flex-col bg-white">
      <div className="flex h-[25px] shrink-0 bg-[#cbcbcb]">
        <button className="flex w-[160px] items-center gap-[9px] pl-[6px] text-[#555]">
          <Svg>
            <path d="M1 1h13v16H1z" fill="#d8d8d8" stroke="#888" />
            <path d="M6 5h8l5-2v15H6z" fill="#d6d6d6" stroke="#888" />
            <path d="M9 14V9h8M12 9V5h5v4" stroke="#888" strokeDasharray="3 1" />
          </Svg>
          Level 1
        </button>
        <div className="flex w-[160px] items-center bg-white pr-[6px] pl-[5px]">
          <button className="flex flex-1 items-center gap-[11px] font-bold text-[#333]">
            <Svg>
              <path d="M1 9l6-7 8-1 4 6v9l-8 3-8-4V9z" fill="#d3d8de" stroke={DARK} strokeWidth="1.2" />
              <path d="M1 9l6-7 5 8-1 9M7 2l8-1M12 10l7-3" stroke={DARK} strokeWidth="1.3" />
              <path d="M5 11l3 1v5l-3-1z" fill="#4a515b" />
            </Svg>
            {'{3D}'}
          </button>
          <button aria-label="Close {3D}">
            <CloseIcon />
          </button>
        </div>
      </div>
      <div className="min-h-0 flex-1">
        <Model />
      </div>
      <ViewControls />
    </main>
  );
}

export default function App() {
  return (
    <div className="flex h-screen flex-col overflow-hidden bg-[#eee] font-['Open_Sans','Noto_Sans',sans-serif] text-sm">
      <TabStrip />
      <Ribbon />
      <div className="flex h-[35px] shrink-0 items-center border-b-2 border-[#c8c8c8] pt-[2px] text-[#111]">Modify | Curtain Panels</div>
      <div className="flex min-h-0 flex-1">
        <PropertiesPalette />
        <Workspace />
      </div>
    </div>
  );
}
